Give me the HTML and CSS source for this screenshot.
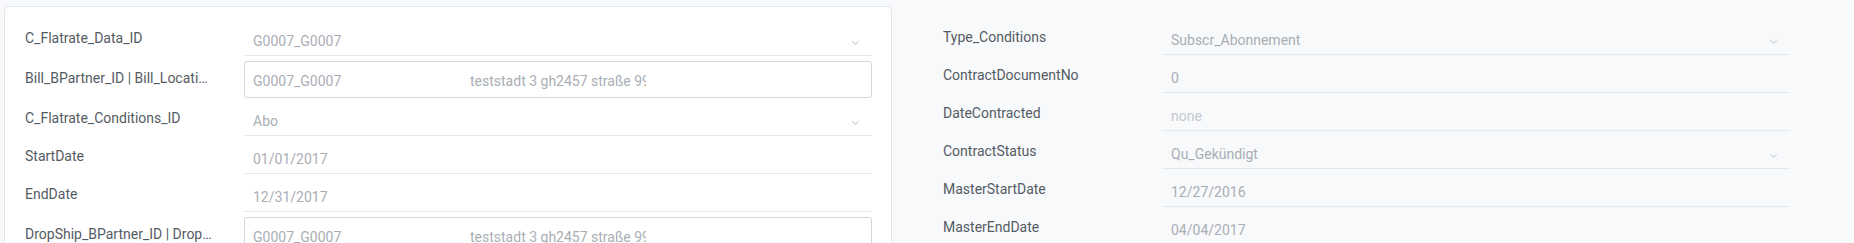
FILE: index.html
```html
<!DOCTYPE html>
<html>
<head>
<meta charset="utf-8">
<link rel="stylesheet" href="styles.css">
</head>
<body>
<div class="page">
  <div class="panel card">
    <div class="row">
      <div class="label">C_Flatrate_Data_ID</div>
      <div class="field line select"><span class="val">G0007_G0007</span><span class="chev"></span></div>
    </div>
    <div class="row">
      <div class="label">Bill_BPartner_ID | Bill_Location_ID | Bill_User_ID</div>
      <div class="field box"><span class="val part1">G0007_G0007</span><span class="val part2">teststadt 3 gh2457 straße 99</span></div>
    </div>
    <div class="row">
      <div class="label">C_Flatrate_Conditions_ID</div>
      <div class="field line select"><span class="val">Abo</span><span class="chev"></span></div>
    </div>
    <div class="row">
      <div class="label">StartDate</div>
      <div class="field line"><span class="val">01/01/2017</span></div>
    </div>
    <div class="row">
      <div class="label">EndDate</div>
      <div class="field line"><span class="val">12/31/2017</span></div>
    </div>
    <div class="row">
      <div class="label">DropShip_BPartner_ID | DropShip_Location_ID</div>
      <div class="field box"><span class="val part1">G0007_G0007</span><span class="val part2">teststadt 3 gh2457 straße 99</span></div>
    </div>
  </div>
  <div class="panel plain">
    <div class="row">
      <div class="label">Type_Conditions</div>
      <div class="field line select"><span class="val">Subscr_Abonnement</span><span class="chev"></span></div>
    </div>
    <div class="row">
      <div class="label">ContractDocumentNo</div>
      <div class="field line"><span class="val">0</span></div>
    </div>
    <div class="row">
      <div class="label">DateContracted</div>
      <div class="field line"><span class="val none">none</span></div>
    </div>
    <div class="row">
      <div class="label">ContractStatus</div>
      <div class="field line select"><span class="val">Qu_Gekündigt</span><span class="chev"></span></div>
    </div>
    <div class="row">
      <div class="label">MasterStartDate</div>
      <div class="field line"><span class="val">12/27/2016</span></div>
    </div>
    <div class="row">
      <div class="label">MasterEndDate</div>
      <div class="field line"><span class="val">04/04/2017</span></div>
    </div>
  </div>
</div>
</body>
</html>
```
FILE: styles.css
```css
html, body {
  margin: 0;
  padding: 0;
  background: #f8f9fb;
  font-family: Roboto, "Liberation Sans", sans-serif;
  font-size: 14px;
  overflow: hidden;
}
.page {
  display: flex;
  gap: 30px;
  padding: 6px 0 0 4px;
  align-items: flex-start;
}
.panel {
  width: 888px;
  box-sizing: border-box;
  padding: 16px 19px 20px 20px;
  border: 1px solid transparent;
  border-radius: 4px;
  height: 300px;
}
.card {
  background: #fff;
  border-color: #e2e7ec;
}
.plain {
  padding-top: 15px;
}
.row {
  display: flex;
  align-items: center;
  margin-bottom: 5px;
}
.label {
  width: 219px;
  flex: none;
  box-sizing: border-box;
  padding-right: 32px;
  color: #555b63;
  white-space: nowrap;
  overflow: hidden;
  text-overflow: ellipsis;
  margin-top: -4px;
}
.field {
  flex: 1;
  display: flex;
  align-items: center;
  box-sizing: border-box;
  position: relative;
}
.line {
  height: 33px;
  border-bottom: 1px solid #e3e8ec;
  padding: 3px 9px 0 9px;
}
.box {
  height: 37px;
  border: 1px solid #cfd7de;
  border-radius: 3px;
  padding: 2px 8px 0 8px;
}
.val {
  color: #a9aeb5;
  white-space: nowrap;
}
.val.none {
  color: #c4c8cd;
}
.part1 {
  width: 217px;
  flex: none;
}
.part2 {
  width: 176px;
  overflow: hidden;
  flex: none;
}
.chev {
  position: absolute;
  right: 14px;
  top: 16px;
  width: 4px;
  height: 4px;
  border-right: 1px solid #c9cfd5;
  border-bottom: 1px solid #c9cfd5;
  transform: rotate(45deg);
}
```
